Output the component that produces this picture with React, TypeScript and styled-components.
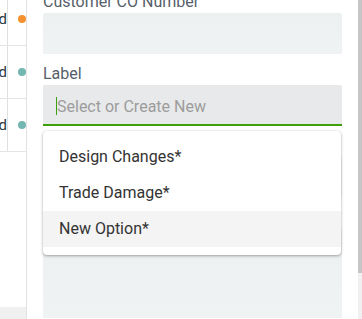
import React from 'react';
import styled, { createGlobalStyle } from 'styled-components';

const GlobalStyle = createGlobalStyle`
  html, body {
    margin: 0;
    padding: 0;
    background: #fff;
    font-family: Roboto, 'Liberation Sans', sans-serif;
  }
`;

const Screen = styled.div`
  display: flex;
  width: 362px;
  height: 319px;
  overflow: hidden;
  background: #fff;
`;

const Table = styled.div`
  display: flex;
  flex-direction: column;
  width: 26px;
  border-right: 1px solid #e2e2e2;
  flex-shrink: 0;
`;

const Rows = styled.div`
  flex: 1;
  margin-top: -7px;
`;

const Row = styled.div`
  display: flex;
  height: 52px;
  border-bottom: 1px solid #e4e4e4;
`;

const TextCell = styled.div`
  width: 7px;
  border-right: 1px solid #e0e0e0;
  overflow: hidden;
  display: flex;
  align-items: center;
  justify-content: flex-end;
  font-size: 15px;
  color: #2f3a45;
  white-space: nowrap;
`;

const DotCell = styled.div`
  flex: 1;
  display: flex;
  align-items: center;
  justify-content: flex-end;
`;

const Dot = styled.span<{ color: string }>`
  width: 8px;
  height: 8px;
  border-radius: 50%;
  background: ${(p) => p.color};
`;

const TableFooter = styled.div`
  height: 12px;
  background: #f0f0f0;
`;

const Panel = styled.div`
  flex: 1;
  padding: 0 16px;
`;

const Form = styled.div`
  display: flex;
  flex-direction: column;
  margin-top: -8px;
  position: relative;
`;

const FieldLabel = styled.div<{ first?: boolean }>`
  height: 19px;
  font-size: 16px;
  line-height: 19px;
  color: #56606a;
  margin-top: ${(p) => (p.first ? '0' : '10px')};
  margin-bottom: 2px;
`;

const Field = styled.div<{ tall?: boolean; focused?: boolean }>`
  height: ${(p) => (p.tall ? '89px' : '41px')};
  box-sizing: border-box;
  border-radius: 2px 2px 0 0;
  background: ${(p) =>
    p.focused ? '#e8e9ea' : 'linear-gradient(180deg, #edf0f1, #f0f3f4)'};
  border-bottom: ${(p) => (p.focused ? '2px solid #3ea00c' : 'none')};
  display: flex;
  align-items: center;
  padding: ${(p) => (p.focused ? '3px 0 0 13px' : '0 0 0 13px')};
`;

const Caret = styled.span`
  width: 1px;
  height: 18px;
  background: #3ea00c;
`;

const Placeholder = styled.span`
  font-size: 16px;
  color: #9c9c9c;
`;

const Menu = styled.div`
  position: absolute;
  top: 139px;
  left: 0;
  width: 298px;
  padding: 8px 0;
  background: #fff;
  border-radius: 4px;
  box-shadow: 0 1px 3px rgba(0, 0, 0, 0.35), 0 0 1px rgba(0, 0, 0, 0.12);
`;

const MenuItem = styled.div<{ active?: boolean }>`
  height: 36px;
  display: flex;
  align-items: center;
  padding: 0 0 2px 16px;
  box-sizing: border-box;
  font-size: 16px;
  color: #333;
  background: ${(p) => (p.active ? '#f4f4f4' : 'transparent')};
`;

const Scrollbar = styled.div`
  width: 4px;
  flex-shrink: 0;
  background: #f0f0f0;
  display: flex;
  flex-direction: column;
`;

const Thumb = styled.div`
  height: 273px;
  background: #c6c6c6;
`;

const rows = [
  { text: 'Signed', color: '#f5922f' },
  { text: 'Signed', color: '#72b7b1' },
  { text: 'Signed', color: '#72b7b1' },
];

const options = ['Design Changes*', 'Trade Damage*', 'New Option*'];

function App() {
  return (
    <>
      <GlobalStyle />
      <Screen>
        <Table>
          <Rows>
            {rows.map((r, i) => (
              <Row key={i}>
                <TextCell>{r.text}</TextCell>
                <DotCell>
                  <Dot color={r.color} />
                </DotCell>
              </Row>
            ))}
          </Rows>
          <TableFooter />
        </Table>
        <Panel>
          <Form>
            <FieldLabel first>Customer CO Number</FieldLabel>
            <Field />
            <FieldLabel>Label</FieldLabel>
            <Field focused>
              <Caret />
              <Placeholder>Select or Create New</Placeholder>
            </Field>
            {/* labels hidden under the open menu */}
            <FieldLabel />
            <Field />
            <FieldLabel />
            <Field tall />
            <Menu>
              {options.map((o, i) => (
                <MenuItem key={o} active={i === 2}>
                  {o}
                </MenuItem>
              ))}
            </Menu>
          </Form>
        </Panel>
        <Scrollbar>
          <Thumb />
        </Scrollbar>
      </Screen>
    </>
  );
}

export default App;
